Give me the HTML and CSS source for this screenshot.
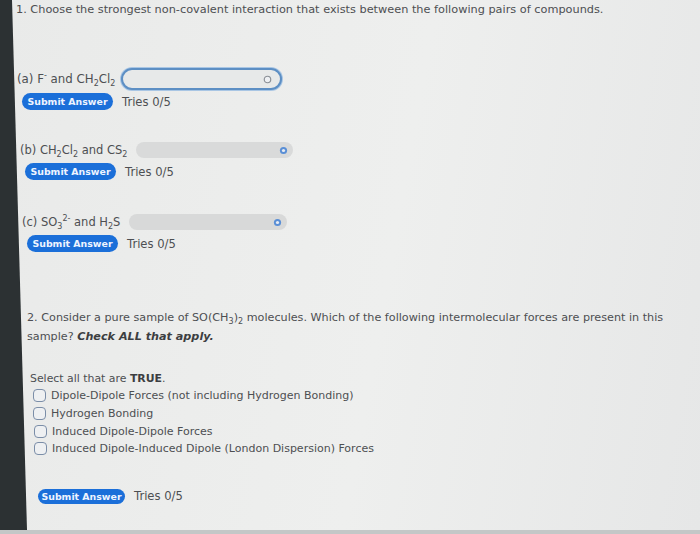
FILE: index.html
```html
<!DOCTYPE html>
<html>
<head>
<meta charset="utf-8">
<link rel="stylesheet" href="styles.css">
</head>
<body>
<div class="screen">
  <div class="edge"></div>
  <main class="page">
    <p class="q1">1. Choose the strongest non-covalent interaction that exists between the following pairs of compounds.</p>

    <section class="part part-a">
      <div class="row">
        <span class="label">(a) F<sup>-</sup> and CH<sub>2</sub>Cl<sub>2</sub></span>
        <span class="select focused"><svg class="sicon" viewBox="0 0 10 10"><circle cx="5" cy="5" r="3.6" fill="#eef0f3" stroke="#8a8f96" stroke-width="1.3"/></svg></span>
      </div>
      <div class="actions"><span class="btn">Submit Answer</span><span class="tries">Tries 0/5</span></div>
    </section>

    <section class="part part-b">
      <div class="row">
        <span class="label">(b) CH<sub>2</sub>Cl<sub>2</sub> and CS<sub>2</sub></span>
        <span class="select sel-b"><svg class="sicon" viewBox="0 0 10 10"><circle cx="5" cy="5" r="4" fill="#5a8fd6"/><circle cx="5" cy="5" r="1.8" fill="#e8ecf2"/></svg></span>
      </div>
      <div class="actions"><span class="btn">Submit Answer</span><span class="tries">Tries 0/5</span></div>
    </section>

    <section class="part part-c">
      <div class="row">
        <span class="label">(c) SO<sub>3</sub><sup>2-</sup> and H<sub>2</sub>S</span>
        <span class="select sel-c"><svg class="sicon" viewBox="0 0 10 10"><circle cx="5" cy="5" r="4" fill="#5a8fd6"/><circle cx="5" cy="5" r="1.8" fill="#e8ecf2"/></svg></span>
      </div>
      <div class="actions"><span class="btn">Submit Answer</span><span class="tries">Tries 0/5</span></div>
    </section>

    <section class="q2">
      <p class="q2text">2. Consider a pure sample of SO(CH<sub>3</sub>)<sub>2</sub> molecules. Which of the following intermolecular forces are present in this</p>
      <p class="q2text">sample? <b><i>Check ALL that apply.</i></b></p>
      <p class="hint">Select all that are <b>TRUE</b>.</p>
      <ul class="opts">
        <li class="opt"><span class="cb"></span>Dipole-Dipole Forces (not including Hydrogen Bonding)</li>
        <li class="opt"><span class="cb"></span>Hydrogen Bonding</li>
        <li class="opt o3"><span class="cb"></span>Induced Dipole-Dipole Forces</li>
        <li class="opt o4"><span class="cb"></span>Induced Dipole-Induced Dipole (London Dispersion) Forces</li>
      </ul>
      <div class="actions a2"><span class="btn">Submit Answer</span><span class="tries">Tries 0/5</span></div>
    </section>
  </main>
</div>
<div class="bottom"></div>
</body>
</html>
```

FILE: styles.css
```css
html, body {
  margin: 0;
  padding: 0;
  width: 700px;
  height: 534px;
  overflow: hidden;
  background: #e8e9e8;
}
.screen {
  display: flex;
  height: 530px;
  position: relative;
}
.edge {
  position: absolute;
  left: 0;
  top: 0;
  width: 28px;
  height: 530px;
  background: #2c3133;
  clip-path: polygon(0 0, 12px 0, 27px 100%, 0 100%);
}
.bottom {
  height: 4px;
  background: #c4c7c7;
}
.page {
  flex: 1;
  padding-top: 3px;
  font-family: "DejaVu Sans", Verdana, sans-serif;
  font-size: 11px;
  color: #4d4f52;
  background: linear-gradient(100deg, #e9eae9 0%, #eeefee 55%, #e6e7e7 100%);
}
p { margin: 0; }
sub, sup { font-size: 8px; line-height: 0; }
sub { vertical-align: -3px; }
sup { vertical-align: 5px; }
.q1 {
  margin-left: 16px;
  line-height: 14px;
  font-size: 11.3px;
  white-space: nowrap;
}
.part { margin-left: 17px; }
.part-a { margin-top: 51px; }
.part-b { margin-top: 32px; margin-left: 20px; }
.part-c { margin-top: 34px; margin-left: 22px; }
.row {
  display: flex;
  align-items: center;
  gap: 3px;
}
.label {
  font-size: 11.8px;
  white-space: nowrap;
}
.part-b .label, .part-c .label { font-size: 11.5px; }
.select {
  display: flex;
  align-items: center;
  justify-content: flex-end;
  box-sizing: border-box;
  border-radius: 9px;
  padding-right: 5px;
}
.focused {
  width: 161px;
  height: 22px;
  margin-left: 3px;
  background: #e7e9e9;
  border: 2px solid #5d8fc4;
  box-shadow: 0 0 0 1px #a9c6e4;
  border-radius: 11px;
  padding-right: 8px;
}
.sel-b {
  width: 157px;
  height: 16px;
  margin-left: 6px;
  background: #d9dada;
}
.sel-c {
  width: 158px;
  height: 16px;
  margin-left: 6px;
  background: #d8d9d9;
}
.sicon { width: 9px; height: 9px; }
.actions {
  display: flex;
  align-items: center;
  gap: 9px;
  margin-top: 3px;
  margin-left: 5px;
}
.part-b .actions, .part-c .actions { margin-top: 5px; }
.btn {
  display: inline-flex;
  align-items: center;
  justify-content: center;
  width: 91px;
  height: 17px;
  border-radius: 9px;
  background: #1b6fd9;
  color: #eef4ff;
  font-weight: bold;
  font-size: 9.4px;
}
.tries { font-size: 11.6px; }
.q2 {
  margin-top: 56px;
  margin-left: 27px;
}
.q2text {
  line-height: 19px;
  font-size: 11.2px;
  white-space: nowrap;
}
.q2text b { color: #3c3e41; }
.hint {
  margin-top: 26px;
  margin-left: 3px;
  line-height: 14px;
  font-size: 10.9px;
}
.hint b { color: #3c3e41; }
.opts {
  list-style: none;
  margin: 1px 0 0 6px;
  padding: 0;
}
.opt {
  display: flex;
  align-items: center;
  gap: 5px;
  height: 17.7px;
  font-size: 11px;
  white-space: nowrap;
}
.o3, .o4 { margin-left: 1px; }
.cb {
  box-sizing: border-box;
  width: 13px;
  height: 13px;
  border: 1.5px solid #7b8ea8;
  border-radius: 4px;
  background: #eef0f2;
}
.a2 {
  margin-top: 31px;
  margin-left: 11px;
}
.a2 .btn { width: 87px; height: 15px; }
```
